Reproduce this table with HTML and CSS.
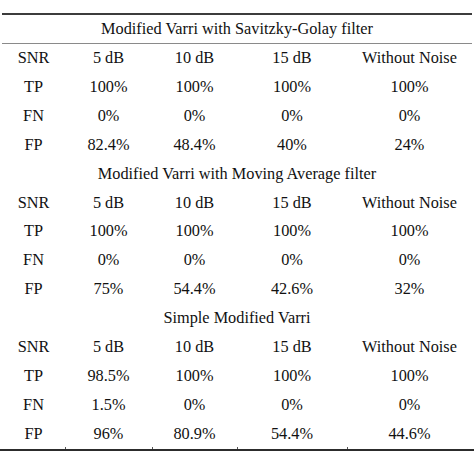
FILE: index.html
```html
<!DOCTYPE html>
<html>
<head>
<meta charset="utf-8">
<link rel="stylesheet" href="styles.css">
</head>
<body>
<div class="table">
  <div class="title first">Modified Varri with Savitzky-Golay filter</div>
  <div class="row"><span>SNR</span><span>5 dB</span><span>10 dB</span><span>15 dB</span><span>Without Noise</span></div>
  <div class="row"><span>TP</span><span>100%</span><span>100%</span><span>100%</span><span>100%</span></div>
  <div class="row"><span>FN</span><span>0%</span><span>0%</span><span>0%</span><span>0%</span></div>
  <div class="row"><span>FP</span><span>82.4%</span><span>48.4%</span><span>40%</span><span>24%</span></div>
  <div class="title">Modified Varri with Moving Average filter</div>
  <div class="row"><span>SNR</span><span>5 dB</span><span>10 dB</span><span>15 dB</span><span>Without Noise</span></div>
  <div class="row"><span>TP</span><span>100%</span><span>100%</span><span>100%</span><span>100%</span></div>
  <div class="row"><span>FN</span><span>0%</span><span>0%</span><span>0%</span><span>0%</span></div>
  <div class="row"><span>FP</span><span>75%</span><span>54.4%</span><span>42.6%</span><span>32%</span></div>
  <div class="title">Simple Modified Varri</div>
  <div class="row"><span>SNR</span><span>5 dB</span><span>10 dB</span><span>15 dB</span><span>Without Noise</span></div>
  <div class="row"><span>TP</span><span>98.5%</span><span>100%</span><span>100%</span><span>100%</span></div>
  <div class="row"><span>FN</span><span>1.5%</span><span>0%</span><span>0%</span><span>0%</span></div>
  <div class="row last"><span>FP</span><span>96%</span><span>80.9%</span><span>54.4%</span><span>44.6%</span></div>
  <div class="ticks"><span></span><span></span><span></span><span></span><span></span></div>
  <div class="bottom"></div>
</div>
</body>
</html>
```
FILE: styles.css
```css
html, body {
  margin: 0;
  padding: 0;
  background: #ffffff;
}
body {
  font-family: "Liberation Serif", "Times New Roman", serif;
  font-size: 16.3px;
  color: #111111;
}
.table {
  margin: 0 2px;
  padding-top: 13px;
}
.title {
  height: 28.92px;
  line-height: 28.92px;
  text-align: center;
  white-space: nowrap;
}
.title.first {
  border-top: 2px solid #3c3c3c;
  height: 28px;
  line-height: 28px;
  border-bottom: 1px solid #8a8a8a;
}
.row, .ticks {
  display: grid;
  grid-template-columns: 63px 87px 85px 110px 125px;
}
.row {
  height: 28.92px;
  line-height: 28.92px;
}
.row span {
  text-align: center;
  white-space: nowrap;
}
.row.last {
  height: 26.92px;
}
.ticks {
  height: 2px;
}
.ticks span + span {
  border-left: 1px solid #555;
}
.bottom {
  height: 2.5px;
  margin: 0 -2px;
  background: #2c2c2c;
}
```
